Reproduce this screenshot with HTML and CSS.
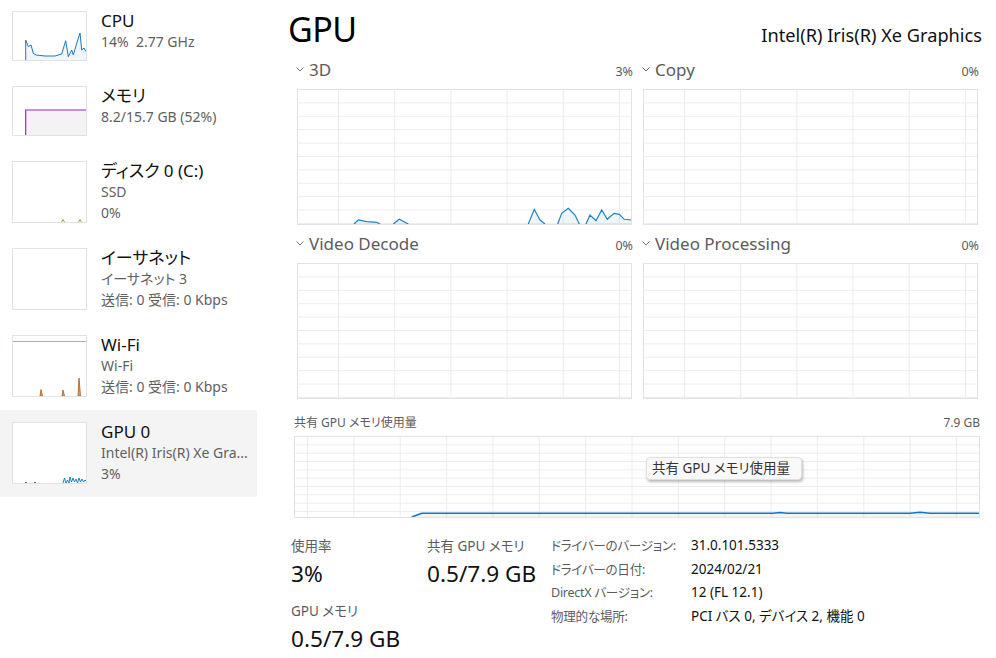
FILE: index.html
```html
<!DOCTYPE html>
<html lang="ja">
<head>
<meta charset="utf-8">
<title>タスク マネージャー - GPU</title>
<link rel="stylesheet" href="styles.css">
</head>
<body>
<div class="app">
  <nav class="sidebar">
    <div class="item">
      <div class="thumb">
        <svg viewBox="0 0 73 48" width="73" height="48">
          <polygon class="cpu-fill" points="12.7,48 12.7,28 15.3,34.7 18,33 20.3,41.3 23,43 32,44 42,44 48.7,42 52.7,28.7 55.3,44.7 58.7,38 60.3,43 64.7,28 67,21 68.7,38 71,36 73,39.7 73,48"/>
          <polyline class="cpu-line" points="12.7,48 12.7,28 15.3,34.7 18,33 20.3,41.3 23,43 32,44 42,44 48.7,42 52.7,28.7 55.3,44.7 58.7,38 60.3,43 64.7,28 67,21 68.7,38 71,36 73,39.7"/>
        </svg>
      </div>
      <div class="info">
        <div class="name">CPU</div>
        <div class="sub">14%&nbsp; 2.77 GHz</div>
      </div>
    </div>
    <div class="item">
      <div class="thumb">
        <svg viewBox="0 0 73 48" width="73" height="48">
          <polygon class="mem-fill" points="12.7,48 12.7,23 73,23 73,48"/>
          <polyline class="mem-line" points="12.7,48 12.7,23 73,23"/>
        </svg>
      </div>
      <div class="info">
        <div class="name">メモリ</div>
        <div class="sub">8.2/15.7 GB (52%)</div>
      </div>
    </div>
    <div class="item tall">
      <div class="thumb">
        <svg viewBox="0 0 73 60" width="73" height="60">
          <polyline class="disk-line" points="48.5,60 50,57.5 51.5,60"/>
          <polyline class="disk-line" points="65.5,60 67,57.5 68.5,60"/>
        </svg>
      </div>
      <div class="info">
        <div class="name">ディスク 0 (C:)</div>
        <div class="sub">SSD</div>
        <div class="sub">0%</div>
      </div>
    </div>
    <div class="item tall">
      <div class="thumb">
        <svg viewBox="0 0 73 60" width="73" height="60"></svg>
      </div>
      <div class="info">
        <div class="name">イーサネット</div>
        <div class="sub">イーサネット 3</div>
        <div class="sub">送信: 0 受信: 0 Kbps</div>
      </div>
    </div>
    <div class="item tall">
      <div class="thumb">
        <svg viewBox="0 0 73 60" width="73" height="60">
          <line class="wifi-top" x1="0" y1="5.5" x2="73" y2="5.5"/>
          <polygon class="wifi-fill" points="27,60 28,53.5 29.5,60"/>
          <polygon class="wifi-fill" points="49,60 50,54 51.5,60"/>
          <polygon class="wifi-fill" points="65,60 66,42 67.5,60"/>
        </svg>
      </div>
      <div class="info">
        <div class="name">Wi-Fi</div>
        <div class="sub">Wi-Fi</div>
        <div class="sub">送信: 0 受信: 0 Kbps</div>
      </div>
    </div>
    <div class="item tall sel">
      <div class="thumb">
        <svg viewBox="0 0 73 60" width="73" height="60">
          <polyline class="gpu-line" points="12,60 13,59 14,60"/>
          <polyline class="gpu-line" points="21,60 22,59 23,60"/>
          <polyline class="gpu-line" points="50,60 51.5,55 53,60 54.5,57 56,60 57,54 58.5,59 60,55 61.5,59 63,56 64.5,60 66,55 67.5,59 69,56 70.5,59 72,57 73,58"/>
        </svg>
      </div>
      <div class="info">
        <div class="name">GPU 0</div>
        <div class="sub">Intel(R) Iris(R) Xe Gra...</div>
        <div class="sub">3%</div>
      </div>
    </div>
  </nav>

  <main class="main">
    <header class="head">
      <h1 class="title">GPU</h1>
      <div class="device">Intel(R) Iris(R) Xe Graphics</div>
    </header>

    <section class="charts">
      <div class="chart">
        <div class="chart-head">
          <span class="lbl"><svg class="chev" viewBox="0 0 8 5" width="8" height="5"><polyline points="0.5,0.5 4,4 7.5,0.5"/></svg>3D</span>
          <span class="pct">3%</span>
        </div>
        <div class="graph">
          <svg viewBox="0 0 333 134" width="333" height="134">
            <path class="data-fill" d="M56,134 L60.3,130 L68.7,131.7 L78.7,132.3 L82,134 Z M95.3,134 L101.3,129.3 L110.3,134 Z M230.3,134 L236.3,119.3 L242,130 L247,134 Z M259.7,134 L263.7,123.3 L270.3,118.3 L277,125 L281.3,134 Z M288,134 L292,125 L298,130.7 L303.7,120 L309.3,129.3 L316,123.3 L321.3,124.3 L326.3,129.3 L333,130 L333,134 Z"/>
            <path class="data-line" d="M56,134 L60.3,130 L68.7,131.7 L78.7,132.3 L82,134 M95.3,134 L101.3,129.3 L110.3,134 M230.3,134 L236.3,119.3 L242,130 L247,134 M259.7,134 L263.7,123.3 L270.3,118.3 L277,125 L281.3,134 M288,134 L292,125 L298,130.7 L303.7,120 L309.3,129.3 L316,123.3 L321.3,124.3 L326.3,129.3 L333,130"/>
          </svg>
        </div>
      </div>
      <div class="chart">
        <div class="chart-head">
          <span class="lbl"><svg class="chev" viewBox="0 0 8 5" width="8" height="5"><polyline points="0.5,0.5 4,4 7.5,0.5"/></svg>Copy</span>
          <span class="pct">0%</span>
        </div>
        <div class="graph"></div>
      </div>
      <div class="chart">
        <div class="chart-head">
          <span class="lbl"><svg class="chev" viewBox="0 0 8 5" width="8" height="5"><polyline points="0.5,0.5 4,4 7.5,0.5"/></svg>Video Decode</span>
          <span class="pct">0%</span>
        </div>
        <div class="graph"></div>
      </div>
      <div class="chart">
        <div class="chart-head">
          <span class="lbl"><svg class="chev" viewBox="0 0 8 5" width="8" height="5"><polyline points="0.5,0.5 4,4 7.5,0.5"/></svg>Video Processing</span>
          <span class="pct">0%</span>
        </div>
        <div class="graph"></div>
      </div>
    </section>

    <section class="shared">
      <div class="shared-head">
        <span>共有 GPU メモリ使用量</span>
        <span>7.9 GB</span>
      </div>
      <div class="shared-graph">
        <svg viewBox="0 0 684 80" width="684" height="80">
          <path class="data-fill" d="M116.7,80 L126.7,76.3 L478,76.3 L485,75.5 L492,76.3 L615,76.3 L625,75.3 L635,76.3 L684,76.3 L684,80 Z"/>
          <path class="data-line thick" d="M116.7,80 L126.7,76.3 L478,76.3 L485,75.5 L492,76.3 L615,76.3 L625,75.3 L635,76.3 L684,76.3"/>
        </svg>
        <div class="tip">共有 GPU メモリ使用量</div>
      </div>
    </section>

    <section class="stats">
      <div class="stat-col c1">
        <div class="stat-lbl">使用率</div>
        <div class="stat-val">3%</div>
        <div class="stat-lbl next">GPU メモリ</div>
        <div class="stat-val">0.5/7.9 GB</div>
      </div>
      <div class="stat-col c2">
        <div class="stat-lbl">共有 GPU メモリ</div>
        <div class="stat-val">0.5/7.9 GB</div>
      </div>
      <div class="kv">
        <div class="kv-row"><span class="k">ドライバーのバージョン:</span><span class="v">31.0.101.5333</span></div>
        <div class="kv-row"><span class="k">ドライバーの日付:</span><span class="v">2024/02/21</span></div>
        <div class="kv-row"><span class="k">DirectX バージョン:</span><span class="v">12 (FL 12.1)</span></div>
        <div class="kv-row"><span class="k">物理的な場所:</span><span class="v">PCI バス 0, デバイス 2, 機能 0</span></div>
      </div>
    </section>
  </main>
</div>
</body>
</html>
```

FILE: styles.css
```css
* { box-sizing: border-box; margin: 0; padding: 0; }
html, body { width: 996px; height: 658px; overflow: hidden; background: #ffffff; }
body {
  font-family: "Noto Sans", "Noto Sans CJK JP", sans-serif;
  font-feature-settings: "palt";
  color: #1a1a1a;
}
.app { display: flex; height: 658px; }

/* sidebar */
.sidebar { width: 257px; flex: none; margin-top: -1px; }
.item { display: flex; padding: 12px 0 13px 12px; }
.item.sel { background: #f4f4f4; }
.thumb { width: 75px; height: 50px; flex: none; border: 1px solid #e2e2e2; background: #ffffff; }
.item.tall .thumb { height: 62px; }
.thumb svg { display: block; }
.info { margin-left: 14px; margin-top: -2px; min-width: 0; }
.name { font-size: 17px; line-height: 23px; color: #111111; white-space: nowrap; }
.sub { font-size: 14px; line-height: 20.5px; color: #5f5f5f; white-space: nowrap; }

.cpu-fill { fill: #f1f6fa; }
.cpu-line { fill: none; stroke: #1979be; stroke-width: 1; }
.mem-fill { fill: #f4f2f4; }
.mem-line { fill: none; stroke: #9b2bb5; stroke-width: 1.2; }
.disk-line { fill: none; stroke: #6db33f; stroke-width: 1; }
.wifi-top { stroke: #d6a47c; stroke-width: 1; }
.wifi-fill { fill: #d9a278; stroke: #a75a1a; stroke-width: 0.8; }
.gpu-line { fill: none; stroke: #1f82c3; stroke-width: 1; }

/* main */
.main { flex: 1; padding: 9px 16px 0 35px; position: relative; }
.head { display: flex; justify-content: space-between; align-items: baseline; height: 40px; }
.title { font-size: 34px; font-weight: 400; line-height: 40px; margin-left: -4px; letter-spacing: -0.5px; color: #000000; }
.device { font-size: 18.2px; margin-right: -2px; color: #111111; }

.charts {
  display: grid;
  grid-template-columns: 339px 339px;
  column-gap: 7px;
  row-gap: 7px;
  margin: 9px 0 0 3px;
}
.chart-head { display: flex; justify-content: space-between; align-items: baseline; height: 24px; padding: 0 1px; }
.lbl { font-size: 17px; line-height: 24px; color: #5c5c5c; white-space: nowrap; }
.chev { margin-right: 5px; vertical-align: 4px; }
.chev polyline { fill: none; stroke: #777777; stroke-width: 1; }
.pct { font-size: 12.5px; color: #5c5c5c; }

.graph, .shared-graph {
  border: 1px solid #e2e2e2;
  background-color: #ffffff;
  background-image:
    linear-gradient(to right, #ececec 1px, transparent 1px),
    linear-gradient(to bottom, transparent calc(100% - 1px), #ececec calc(100% - 1px));
  background-repeat: repeat;
}
.graph {
  margin: 7px 2px 0;
  height: 136px;
  background-size: 56.2px 100%, 100% 13.4px;
  background-position: 40px 0, 0 0;
}
.graph svg, .shared-graph svg { display: block; }
.data-fill { fill: rgba(17, 125, 187, 0.07); }
.data-line { fill: none; stroke: #1f82c3; stroke-width: 1.2; }
.data-line.thick { stroke: #1775b4; stroke-width: 1.6; }

.shared { margin: 16px 0 0 2px; }
.shared-head { display: flex; justify-content: space-between; align-items: baseline; height: 16px; font-size: 12px; line-height: 16px; color: #5c5c5c; }
.shared-graph {
  position: relative;
  margin-top: 5px;
  height: 82px;
  background-size: 46.36px 100%, 100% 8.33px;
  background-position: 12px 0, 0 0;
}
.tip {
  position: absolute;
  left: 351px;
  top: 20px;
  width: 156px;
  height: 23px;
  padding-left: 5px;
  background: #f9f9f9;
  border: 1px solid #e0e0e0;
  border-radius: 4px;
  box-shadow: 1px 2px 3px rgba(0, 0, 0, 0.28);
  font-size: 13.5px;
  line-height: 21px;
  color: #333333;
  white-space: nowrap;
}

/* stats */
.stats { display: flex; margin: 19px 0 0 -1px; }
.stat-col.c1 { width: 136px; }
.stat-col.c2 { width: 124px; }
.stat-lbl { font-size: 13.5px; line-height: 18px; color: #5c5c5c; white-space: nowrap; }
.stat-lbl.next { margin-top: 13px; }
.stat-val { font-size: 22.6px; line-height: 30px; margin-top: 4px; color: #111111; white-space: nowrap; }
.kv { display: flex; flex-direction: column; margin-top: -3px; }
.kv-row { display: flex; align-items: baseline; height: 23.7px; line-height: 23.7px; white-space: nowrap; overflow: visible; }
.kv .k { width: 140px; flex: none; font-size: 12.6px; letter-spacing: -0.3px; color: #5c5c5c; }
.kv .v { font-size: 13.5px; color: #111111; }
```
